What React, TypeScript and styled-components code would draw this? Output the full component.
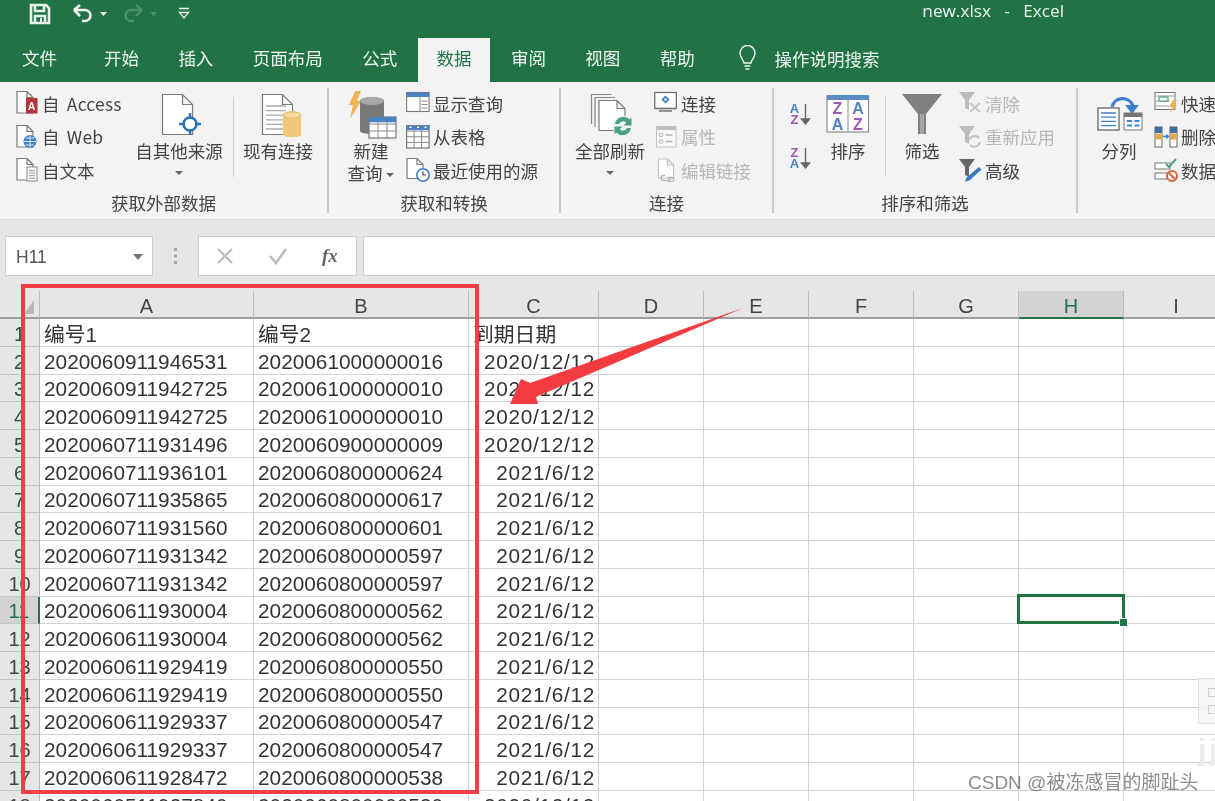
import React from "react";
import styled, { createGlobalStyle } from "styled-components";

const GREEN = "#217346";
const CJK = '"Noto Sans CJK SC", "Liberation Sans", sans-serif';

const GlobalStyle = createGlobalStyle`
  html, body { margin: 0; padding: 0; background: #fff; overflow: hidden; }
`;

const Page = styled.div`
  position: relative;
  width: 1215px;
  height: 801px;
  overflow: hidden;
  background: #fff;
  filter: blur(0.35px);
  font-family: ${CJK};
`;

/* title bar and tabs */
const Head = styled.div`
  height: 82px;
  background: ${GREEN};
  color: #eef5f0;
`;

const TitleBar = styled.div`
  height: 38px;
  display: flex;
  align-items: flex-start;
  padding: 3px 0 0 29px;
  box-sizing: border-box;
`;

const QatIcon = styled.svg<{ $gap?: number }>`
  display: block;
  margin-left: ${(p) => p.$gap || 0}px;
`;

const Title = styled.div`
  margin-left: auto;
  padding-right: 151px;
  margin-top: -3px;
  font: 17.2px/22px "Open Sans", sans-serif;
  white-space: pre;
`;

const Tabs = styled.div`
  height: 44px;
  display: flex;
  align-items: stretch;
  gap: 2.4px;
  padding-left: 3.5px;
`;

const Tab = styled.div<{ $active?: boolean; $first?: boolean }>`
  padding: 0 18.5px;
  margin-right: ${(p) => (p.$first ? 7.6 : 0)}px;
  font-size: 17.5px;
  line-height: 40px;
  background: ${(p) => (p.$active ? "#f3f3f3" : "transparent")};
  color: ${(p) => (p.$active ? GREEN : "inherit")};
`;

const TellMe = styled.div`
  display: flex;
  align-items: center;
  gap: 18px;
  margin-left: 22px;
  font-size: 17.5px;
  padding-bottom: 4px;
`;

/* ribbon */
const Ribbon = styled.div`
  height: 138px;
  box-sizing: border-box;
  display: flex;
  background: #f3f3f3;
  border-bottom: 1px solid #dcdcdc;
  color: #444;
  font-size: 17.5px;
  overflow: hidden;
`;

const Group = styled.div<{ $w: number; $last?: boolean }>`
  flex: none;
  width: ${(p) => p.$w}px;
  height: 125px;
  margin-top: 6px;
  box-sizing: border-box;
  display: flex;
  flex-direction: column;
  border-right: ${(p) => (p.$last ? "none" : "2px solid #c9c9c9")};
`;

const GroupBody = styled.div<{ $pad: number }>`
  flex: 1;
  display: flex;
  align-items: flex-start;
  padding-left: ${(p) => p.$pad}px;
  white-space: nowrap;
`;

const GroupLabel = styled.div`
  text-align: center;
  line-height: 18px;
  height: 18px;
  margin-bottom: 1px;
`;

const SmallCol = styled.div<{ $w: number; $gap?: number }>`
  flex: none;
  width: ${(p) => p.$w}px;
  margin-top: -1.5px;
  margin-left: ${(p) => p.$gap || 0}px;
  display: flex;
  flex-direction: column;
`;

const SmallRow = styled.div<{ $off?: boolean; $tight?: boolean }>`
  height: 33.5px;
  display: flex;
  align-items: center;
  gap: ${(p) => (p.$tight ? 2 : 3)}px;
  color: ${(p) => (p.$off ? "#b8b8b8" : "inherit")};
`;

const LatinLabel = styled.span`
  letter-spacing: 0.2px;
  word-spacing: 3px;
`;

const SmallIcon = styled.svg`
  flex: none;
  display: block;
  width: 24px;
  height: 24px;
`;

const LargeBtn = styled.div<{ $w: number; $gap?: number }>`
  flex: none;
  width: ${(p) => p.$w}px;
  margin-left: ${(p) => p.$gap || 0}px;
  display: flex;
  flex-direction: column;
  align-items: center;
  line-height: 22px;
`;

const LargeIcon = styled.svg`
  display: block;
  height: 52px;
  overflow: visible;
`;

const Caret = styled.span`
  display: inline-block;
  width: 0;
  height: 0;
  border-left: 4px solid transparent;
  border-right: 4px solid transparent;
  border-top: 4.5px solid #666;
  vertical-align: middle;
`;

const NameCaret = styled(Caret)`
  border-left-width: 5.5px;
  border-right-width: 5.5px;
  border-top-width: 6px;
  border-top-color: #777;
`;

const CaretRow = styled.div`
  height: 22px;
  display: flex;
  align-items: center;
  justify-content: center;
`;

const SubSep = styled.div<{ $l: number; $r: number }>`
  flex: none;
  width: 1px;
  height: 80px;
  margin: 9px ${(p) => p.$r}px 0 ${(p) => p.$l}px;
  background: #cfcfcf;
`;

/* formula bar */
const FormulaArea = styled.div`
  height: 71px;
  box-sizing: border-box;
  display: flex;
  align-items: flex-start;
  padding: 16px 0 0 5px;
  background: #e6e6e6;
`;

const NameBox = styled.div`
  flex: none;
  width: 148px;
  height: 40px;
  box-sizing: border-box;
  display: flex;
  align-items: center;
  justify-content: space-between;
  padding: 2px 9px 0 10px;
  background: #fff;
  border: 1px solid #cdcdcd;
  color: #555;
  font: 17.5px "Liberation Sans", sans-serif;
`;

const GripIcon = styled.svg`
  flex: none;
  margin: 12px 21.5px 0 20.5px;
`;

const FxBox = styled.div`
  flex: none;
  width: 159px;
  height: 40px;
  box-sizing: border-box;
  display: flex;
  align-items: center;
  gap: 34px;
  padding-left: 17px;
  background: #fff;
  border: 1px solid #cdcdcd;
`;

const FxText = styled.span`
  font: italic 700 19px "Liberation Serif", serif;
  color: #666;
`;

const FormulaInput = styled.div`
  flex: 1;
  height: 40px;
  margin-left: 6px;
  box-sizing: border-box;
  background: #fff;
  border: 1px solid #cdcdcd;
  border-right: none;
`;

/* sheet */
const Sheet = styled.div`
  display: grid;
  width: 1230px;
  grid-template-columns: 40px 214px 215px 130px 105px 105px 105px 105px 105px 105px;
  grid-template-rows: 28px;
  grid-auto-rows: 27.75px;
`;

const Corner = styled.div`
  position: relative;
  background: #e6e6e6;
  border-right: 1px solid #bdbdbd;
  border-bottom: 2px solid #9e9e9e;
  box-sizing: border-box;
  &::after {
    content: "";
    position: absolute;
    right: 5px;
    bottom: 3px;
    border-left: 10px solid transparent;
    border-bottom: 14px solid #b8b8b8;
  }
`;

const ColHead = styled.div<{ $on?: boolean }>`
  box-sizing: border-box;
  display: flex;
  align-items: center;
  justify-content: center;
  padding-top: 5px;
  font: 20px "Liberation Sans", sans-serif;
  background: ${(p) => (p.$on ? "#d3d3d3" : "#e6e6e6")};
  color: ${(p) => (p.$on ? GREEN : "#444")};
  border-right: 1px solid #bdbdbd;
  border-bottom: 2px solid ${(p) => (p.$on ? GREEN : "#9e9e9e")};
`;

const RowHead = styled.div<{ $on?: boolean }>`
  box-sizing: border-box;
  display: flex;
  align-items: flex-end;
  justify-content: center;
  font: 20px/24px "Liberation Sans", sans-serif;
  background: ${(p) => (p.$on ? "#d3d3d3" : "#e6e6e6")};
  color: ${(p) => (p.$on ? GREEN : "#444")};
  border-right: ${(p) => (p.$on ? `2px solid ${GREEN}` : "1px solid #bdbdbd")};
  border-bottom: 1px solid #c4c4c4;
`;

const Cell = styled.div<{ $date?: boolean; $title?: boolean }>`
  position: relative;
  box-sizing: border-box;
  display: flex;
  align-items: flex-end;
  justify-content: ${(p) => (p.$date ? "flex-end" : "flex-start")};
  padding: 0 ${(p) => (p.$date ? 3 : 0)}px 0 ${(p) => (p.$date ? 0 : 4)}px;
  font-family: "Liberation Sans", "Noto Sans CJK SC", sans-serif;
  font-size: 20.8px;
  line-height: ${(p) => (p.$title ? 22 : 24)}px;
  letter-spacing: ${(p) => (p.$date ? 0.7 : 0)}px;
  color: #333;
  white-space: nowrap;
  border-right: 1px solid #d2d2d2;
  border-bottom: 1px solid #d2d2d2;
`;

const Selection = styled.div`
  position: absolute;
  z-index: 2;
  inset: -2.5px -2px -1px -2px;
  border: 3px solid ${GREEN};
  &::after {
    content: "";
    position: absolute;
    right: -6px;
    bottom: -6px;
    width: 7px;
    height: 7px;
    background: ${GREEN};
    border: 1px solid #fff;
  }
`;

/* annotations over the screenshot */
const RedBox = styled.div`
  position: absolute;
  z-index: 3;
  left: 21px;
  top: 284px;
  width: 458px;
  height: 510px;
  box-sizing: border-box;
  border: 4px solid #ef3f42;
`;

const ArrowMark = styled.svg`
  position: absolute;
  z-index: 3;
  left: 500px;
  top: 300px;
`;

const Watermark = styled.div`
  position: absolute;
  z-index: 4;
  left: 968px;
  top: 771px;
  font: 19px/24px "Liberation Sans", "Noto Sans CJK SC", sans-serif;
  color: rgba(110, 110, 110, 0.8);
  white-space: nowrap;
`;

const GhostBox = styled.div`
  position: absolute;
  z-index: 4;
  left: 1198px;
  top: 678px;
  width: 30px;
  height: 46px;
  box-sizing: border-box;
  background: rgba(245, 245, 245, 0.85);
  border: 1.5px solid #e2e2e2;
  &::before,
  &::after {
    content: "";
    position: absolute;
    left: 9px;
    width: 12px;
    height: 7px;
    border: 1.5px solid #cfcfcf;
  }
  &::before { top: 9px; }
  &::after { top: 26px; }
`;

const GhostText = styled.div`
  position: absolute;
  z-index: 4;
  left: 1198px;
  top: 730px;
  font: 700 30px/40px "Liberation Sans", sans-serif;
  letter-spacing: 3px;
  color: #ececec;
`;

/* drawn icons */
const PageShape = ({ x, y, w, h, f = 6, c = "#7a7a7a" }: { x: number; y: number; w: number; h: number; f?: number; c?: string }) => (
  <path
    d={`M${x} ${y}h${w - f}l${f} ${f}v${h - f}h${-w}zM${x + w - f} ${y}v${f}h${f}`}
    fill="#fff"
    stroke={c}
    strokeWidth={1.2}
  />
);

const Lines = ({ x, y, w, n, step, c = "#aaa" }: { x: number; y: number; w: number; n: number; step: number; c?: string }) => (
  <path
    d={Array.from({ length: n }, (_, i) => `M${x} ${y + i * step}h${w}`).join("")}
    stroke={c}
    strokeWidth={1.3}
    fill="none"
  />
);

const TableShape = ({ x, y, w, h, cols, rows, head = "#4a82c3" }: { x: number; y: number; w: number; h: number; cols: number; rows: number; head?: string }) => {
  const d: string[] = [];
  for (let i = 1; i < cols; i++) d.push(`M${x + (w * i) / cols} ${y}v${h}`);
  for (let i = 1; i < rows; i++) d.push(`M${x} ${y + (h * i) / rows}h${w}`);
  return (
    <>
      <rect x={x} y={y} width={w} height={h} fill="#fff" stroke="#777" strokeWidth={1.2} />
      <path d={d.join("")} stroke="#888" strokeWidth={1} fill="none" />
      <rect x={x} y={y} width={w} height={h / (rows + 1)} fill={head} />
    </>
  );
};

const Funnel = ({ c }: { c: string }) => <path d="M1 1h16l-6 8v10l-4-2V9z" fill={c} />;

const IconAccess = () => (
  <SmallIcon viewBox="0 0 24 24">
    <PageShape x={1} y={0.5} w={16} h={21.5} />
    <rect x={10} y={7} width={11.5} height={15.5} fill="#b5343c" />
    <text x={15.7} y={19} fontSize={10} fontWeight={700} fill="#fff" textAnchor="middle" fontFamily="Liberation Sans">A</text>
  </SmallIcon>
);

const IconWeb = () => (
  <SmallIcon viewBox="0 0 24 24">
    <PageShape x={1} y={0.5} w={16} h={21.5} />
    <circle cx={14} cy={16.5} r={6.5} fill="#3f80cc" />
    <path d="M8 16.5h12M14 10.5v12M10 13h8M10 20h8" stroke="#d8e8f8" strokeWidth={1} />
  </SmallIcon>
);

const IconTextFile = () => (
  <SmallIcon viewBox="0 0 24 24">
    <PageShape x={1} y={0.5} w={16} h={21.5} />
    <rect x={11} y={9} width={10} height={14} fill="#fff" stroke="#888" />
    <Lines x={13} y={12.5} w={6} n={4} step={2.6} />
  </SmallIcon>
);

const IconOtherSources = () => (
  <LargeIcon width={88} viewBox="0 0 88 52">
    <PageShape x={27.5} y={6.5} w={30} h={40} f={10} />
    <circle cx={55} cy={36} r={6.5} fill="#fff" stroke="#2f73b5" strokeWidth={2.6} />
    <path d="M55 25v6M55 41v6M44 36h6M60 36h6" stroke="#2f73b5" strokeWidth={2.4} />
  </LargeIcon>
);

const IconConnections = () => (
  <LargeIcon width={70} viewBox="0 0 70 52">
    <PageShape x={19.5} y={6.5} w={30} h={40} f={10} />
    <Lines x={23} y={18} w={20} n={6} step={4.6} />
    <path d="M40 27c0-5 18-5 18 0v20c0 3-18 3-18 0z" fill="#efc878" />
    <ellipse cx={49} cy={27} rx={9} ry={3} fill="#f7dca2" stroke="#e4b65e" strokeWidth={0.8} />
  </LargeIcon>
);

const IconNewQuery = () => (
  <LargeIcon width={52} viewBox="0 0 52 52">
    <path d="M10 3h6l-4 10h4L5 31l3-14H4z" fill="#efb24e" />
    <path d="M15 13c0-5 24-5 24 0v30c0 4-24 4-24 0z" fill="#787878" />
    <ellipse cx={27} cy={13} rx={12} ry={4} fill="#a8a8a8" />
    <TableShape x={24} y={29} w={27} h={21} cols={3} rows={3} />
  </LargeIcon>
);

const IconShowQuery = () => (
  <SmallIcon viewBox="0 0 24 24">
    <rect x={0.6} y={1.5} width={22.5} height={19} fill="#fff" stroke="#777" strokeWidth={1.1} />
    <rect x={0.6} y={1.5} width={22.5} height={4.5} fill="#4a82c3" />
    <path d="M14 6v14M15.5 10h6M15.5 13.5h6M15.5 17h6" stroke="#888" fill="none" />
  </SmallIcon>
);

const IconFromTable = () => (
  <SmallIcon viewBox="0 0 24 24">
    <TableShape x={0.6} y={0.5} w={22.5} h={22.5} cols={3} rows={4} />
    <path d="M3.5 2.2h2M11 2.2h2M18.5 2.2h2" stroke="#fff" strokeWidth={1.6} />
  </SmallIcon>
);

const IconRecent = () => (
  <SmallIcon viewBox="0 0 24 24">
    <PageShape x={1} y={0.5} w={16} h={20} />
    <circle cx={17} cy={17} r={6.2} fill="#fff" stroke="#3f80cc" strokeWidth={1.6} />
    <path d="M17 13.5V17h3" stroke="#444" strokeWidth={1.2} fill="none" />
  </SmallIcon>
);

const IconRefreshAll = () => (
  <LargeIcon width={70} viewBox="0 0 70 52">
    <path d="M16.5 36V6.5h20M20 39V9.5h20" stroke="#888" strokeWidth={1.2} fill="none" />
    <PageShape x={24} y={12.5} w={26} h={30} f={8} />
    <circle cx={48} cy={38} r={10.5} fill="#f3f3f3" />
    <path d="M40 36a8.5 8.5 0 0 1 14.5-4.5l2-2v8h-8l2.8-2.8a4.5 4.5 0 0 0-7.3 1.3zM56 40a8.5 8.5 0 0 1-14.5 4.5l-2 2v-8h8l-2.8 2.8a4.5 4.5 0 0 0 7.3-1.3z" fill="#4aa27a" />
  </LargeIcon>
);

const IconConnect = () => (
  <SmallIcon viewBox="0 0 24 24">
    <rect x={0.8} y={1.5} width={21.5} height={16} fill="#fff" stroke="#666" strokeWidth={1.2} />
    <path d="M0.8 17.5h21.5M5 20h13" stroke="#777" strokeWidth={1.5} />
    <path d="M11.5 4.5l4 4-4 4-4-4z" fill="#3f7fc9" />
    <circle cx={11.5} cy={8.5} r={1.3} fill="#fff" />
  </SmallIcon>
);

const IconProps = () => (
  <SmallIcon viewBox="0 0 24 24">
    <rect x={2.5} y={1.5} width={19.5} height={20.5} fill="#f8f8f8" stroke="#c4c4c4" />
    <rect x={2.5} y={1.5} width={19.5} height={3.5} fill="#bdbdbd" />
    <circle cx={7} cy={10} r={1.8} fill="none" stroke="#b5b5b5" />
    <circle cx={7} cy={16.5} r={1.8} fill="none" stroke="#b5b5b5" />
    <path d="M11.5 10h7M11.5 16.5h7" stroke="#b5b5b5" strokeWidth={1.3} />
  </SmallIcon>
);

const IconEditLinks = () => (
  <SmallIcon viewBox="0 0 24 24">
    <PageShape x={4.5} y={1} w={15} h={19} c="#c2c2c2" />
    <path d="M11 17.5H9.5a2.5 2.5 0 0 0 0 5H14a2.5 2.5 0 0 0 2-4" stroke="#b8b8b8" strokeWidth={1.3} fill="none" />
    <path d="M13 19.5h5a2 2 0 0 1 0 4h-4" stroke="#b8b8b8" strokeWidth={1.3} fill="none" />
  </SmallIcon>
);

const SortSvg = styled.svg<{ $top: number }>`
  display: block;
  margin-top: ${(p) => p.$top}px;
`;

const SortSmall = ({ top, first, second, c1, c2 }: { top: number; first: string; second: string; c1: string; c2: string }) => (
  <SortSvg width={24} height={24} viewBox="0 0 24 24" $top={top}>
    <text x={5.5} y={11} fontSize={13} fontWeight={700} fill={c1} textAnchor="middle" fontFamily="Liberation Sans">{first}</text>
    <text x={5.5} y={22} fontSize={13} fontWeight={700} fill={c2} textAnchor="middle" fontFamily="Liberation Sans">{second}</text>
    <path d="M16.5 2v19M12.5 17l4 5 4-5z" stroke="#666" strokeWidth={1.4} fill="#666" />
  </SortSvg>
);

const IconSort = () => (
  <LargeIcon width={44} viewBox="0 0 44 52">
    <rect x={1} y={8} width={41.5} height={36} fill="#fff" stroke="#8a8a8a" strokeWidth={1.2} />
    <rect x={1} y={7} width={41.5} height={5} fill="#5b8cc4" />
    <path d="M22 12v32" stroke="#8a8a8a" />
    <g fontFamily="Liberation Sans" fontWeight={700} fontSize={16} textAnchor="middle">
      <text x={11.5} y={26} fill="#9b59b6">Z</text>
      <text x={11.5} y={42} fill="#4a82c3">A</text>
      <text x={32} y={26} fill="#4a82c3">A</text>
      <text x={32} y={42} fill="#9b59b6">Z</text>
    </g>
  </LargeIcon>
);

const IconFilter = () => (
  <LargeIcon width={44} viewBox="0 0 44 52">
    <path d="M2 6h40L26 26v20h-8V26z" fill="#7f7f7f" />
    <path d="M20 26h4v20h-4z" fill="#a6a6a6" />
  </LargeIcon>
);

const IconClear = () => (
  <SmallIcon viewBox="0 0 24 24">
    <Funnel c="#bcbcbc" />
    <path d="M12 12l10 9M22 12l-10 9" stroke="#c4c4c4" strokeWidth={1.8} />
  </SmallIcon>
);

const IconReapply = () => (
  <SmallIcon viewBox="0 0 24 24">
    <Funnel c="#bcbcbc" />
    <path d="M11 15a6 6 0 0 1 10-2M22 17a6 6 0 0 1-10 3" stroke="#c4c4c4" strokeWidth={2} fill="none" />
  </SmallIcon>
);

const IconAdvanced = () => (
  <SmallIcon viewBox="0 0 24 24">
    <Funnel c="#666" />
    <path d="M21 9l2.5 2.5L12 22l-5 2 1.6-4.6z" fill="#3a7cc2" />
  </SmallIcon>
);

const IconSplit = () => (
  <LargeIcon width={50} viewBox="0 0 50 52">
    <path d="M18 19c2-10 17-12 21-1" stroke="#3f80cc" strokeWidth={3.2} fill="none" />
    <path d="M31 17h14l-7 9z" fill="#3f80cc" />
    <rect x={4} y={20} width={21} height={22} fill="#fff" stroke="#666" strokeWidth={1.3} />
    <Lines x={7} y={25} w={15} n={4} step={4.2} c="#3f80cc" />
    <rect x={30} y={25} width={18} height={17} fill="#fff" stroke="#777" />
    <rect x={30} y={25} width={18} height={4} fill="#777" />
    <path d="M33 33h5M40.5 33h5M33 37.5h5M40.5 37.5h5" stroke="#3f80cc" strokeWidth={2} />
  </LargeIcon>
);

const IconFlash = () => (
  <SmallIcon viewBox="0 0 24 24">
    <rect x={1} y={1.5} width={20} height={17} fill="#fff" stroke="#777" />
    <path d="M1 5h20M1 10h14M1 15h14" stroke="#999" fill="none" />
    <rect x={5} y={6} width={9} height={4} fill="#fff" stroke="#4aa27a" strokeWidth={1.2} />
    <path d="M19 9h4l-3 5h3l-7 8 2-6h-3z" fill="#efb24e" />
  </SmallIcon>
);

const IconDedupe = () => (
  <SmallIcon viewBox="0 0 24 24">
    <rect x={1} y={2} width={7} height={20} fill="#fff" stroke="#666" />
    <rect x={1} y={2} width={7} height={6} fill="#3d6fa8" />
    <rect x={1} y={8.5} width={7} height={6} fill="#e2a94f" />
    <rect x={16} y={2} width={7} height={20} fill="#fff" stroke="#666" />
    <rect x={16} y={2} width={7} height={6} fill="#3d6fa8" />
    <rect x={16} y={8.5} width={7} height={6} fill="#e2a94f" />
    <path d="M9 11.5h5M12 9.5l2.5 2-2.5 2" stroke="#3f80cc" strokeWidth={1.3} fill="none" />
  </SmallIcon>
);

const IconValidate = () => (
  <SmallIcon viewBox="0 0 24 24">
    <rect x={1} y={5} width={15} height={6} fill="#fff" stroke="#777" />
    <rect x={1} y={15} width={12} height={6} fill="#fff" stroke="#777" />
    <path d="M12 6l3 3 7-8" stroke="#4aa27a" strokeWidth={2} fill="none" />
    <circle cx={18} cy={18} r={5} fill="#fff" stroke="#d8623f" strokeWidth={2} />
    <path d="M14.5 14.5l7 7" stroke="#d8623f" strokeWidth={2} />
  </SmallIcon>
);

const COLS = ["A", "B", "C", "D", "E", "F", "G", "H", "I"];

const ROWS: [string, string, string][] = [
  ["编号1", "编号2", "到期日期"],
  ["2020060911946531", "2020061000000016", "2020/12/12"],
  ["2020060911942725", "2020061000000010", "2020/12/12"],
  ["2020060911942725", "2020061000000010", "2020/12/12"],
  ["2020060711931496", "2020060900000009", "2020/12/12"],
  ["2020060711936101", "2020060800000624", "2021/6/12"],
  ["2020060711935865", "2020060800000617", "2021/6/12"],
  ["2020060711931560", "2020060800000601", "2021/6/12"],
  ["2020060711931342", "2020060800000597", "2021/6/12"],
  ["2020060711931342", "2020060800000597", "2021/6/12"],
  ["2020060611930004", "2020060800000562", "2021/6/12"],
  ["2020060611930004", "2020060800000562", "2021/6/12"],
  ["2020060611929419", "2020060800000550", "2021/6/12"],
  ["2020060611929419", "2020060800000550", "2021/6/12"],
  ["2020060611929337", "2020060800000547", "2021/6/12"],
  ["2020060611929337", "2020060800000547", "2021/6/12"],
  ["2020060611928472", "2020060800000538", "2021/6/12"],
  ["2020060511927840", "2020060800000530", "2020/12/12"],
];

const TABS = ["开始", "插入", "页面布局", "公式", "数据", "审阅", "视图", "帮助"];

export default function App() {
  return (
    <Page>
      <GlobalStyle />
      <Head>
        <TitleBar>
          <QatIcon width={22} height={22} viewBox="0 0 22 22">
            <path d="M2 2h15l3 3v15H2zM6 2v6h9V2M6 20v-7h10v7" fill="none" stroke="#e8f2ea" strokeWidth={2.6} />
            <path d="M11 15h2v5h-2z" fill="#e8f2ea" />
          </QatIcon>
          <QatIcon $gap={21} width={22} height={20} viewBox="0 0 22 20">
            <path d="M2 7l6-5M2 7l6 6M2 7h11a5.5 5.5 0 0 1 0 11h-3" fill="none" stroke="#eef5f0" strokeWidth={2.6} />
          </QatIcon>
          <QatIcon $gap={6} width={7} height={20} viewBox="0 0 7 20">
            <path d="M0 9h7l-3.5 4z" fill="#eef5f0" />
          </QatIcon>
          <QatIcon $gap={16} width={21} height={20} viewBox="0 0 21 20">
            <path d="M19 7l-6-5M19 7l-6 6M19 7H8a5.5 5.5 0 0 0 0 11h3" fill="none" stroke="#4a8f69" strokeWidth={2.4} />
          </QatIcon>
          <QatIcon $gap={6} width={7} height={20} viewBox="0 0 7 20">
            <path d="M0 9h7l-3.5 4z" fill="#4a8f69" />
          </QatIcon>
          <QatIcon $gap={21} width={12} height={20} viewBox="0 0 12 20">
            <path d="M1 5.5h10M1.5 9.5h9L6 15z" fill="none" stroke="#e8f2ea" strokeWidth={1.3} />
          </QatIcon>
          <Title>new.xlsx   -   Excel</Title>
        </TitleBar>
        <Tabs>
          <Tab $first>文件</Tab>
          {TABS.map((t) => (
            <Tab key={t} $active={t === "数据"}>{t}</Tab>
          ))}
          <TellMe>
            <svg width={19} height={26} viewBox="0 0 19 26">
              <path d="M6 18c0-3-4-5-4-10a7.5 7.5 0 0 1 15 0c0 5-4 7-4 10zM6.5 21h6M7.5 24h4" fill="none" stroke="#eef5f0" strokeWidth={1.4} />
            </svg>
            操作说明搜索
          </TellMe>
        </Tabs>
      </Head>

      <Ribbon>
        <Group $w={329}>
          <GroupBody $pad={16}>
            <SmallCol $w={117}>
              <SmallRow $tight><IconAccess /><LatinLabel>自 Access</LatinLabel></SmallRow>
              <SmallRow $tight><IconWeb /><LatinLabel>自 Web</LatinLabel></SmallRow>
              <SmallRow $tight><IconTextFile />自文本</SmallRow>
            </SmallCol>
            <LargeBtn $w={88} $gap={2}>
              <IconOtherSources />
              <div>自其他来源</div>
              <CaretRow><Caret /></CaretRow>
            </LargeBtn>
            <SubSep $l={10} $r={9} />
            <LargeBtn $w={70}>
              <IconConnections />
              <div>现有连接</div>
            </LargeBtn>
          </GroupBody>
          <GroupLabel>获取外部数据</GroupLabel>
        </Group>

        <Group $w={232}>
          <GroupBody $pad={16}>
            <LargeBtn $w={52}>
              <IconNewQuery />
              <div>新建</div>
              <div>查询 <Caret /></div>
            </LargeBtn>
            <SmallCol $w={150} $gap={9}>
              <SmallRow><IconShowQuery />显示查询</SmallRow>
              <SmallRow><IconFromTable />从表格</SmallRow>
              <SmallRow><IconRecent />最近使用的源</SmallRow>
            </SmallCol>
          </GroupBody>
          <GroupLabel>获取和转换</GroupLabel>
        </Group>

        <Group $w={213}>
          <GroupBody $pad={13}>
            <LargeBtn $w={72}>
              <IconRefreshAll />
              <div>全部刷新</div>
              <CaretRow><Caret /></CaretRow>
            </LargeBtn>
            <SmallCol $w={110} $gap={8}>
              <SmallRow><IconConnect />连接</SmallRow>
              <SmallRow $off><IconProps />属性</SmallRow>
              <SmallRow $off><IconEditLinks />编辑链接</SmallRow>
            </SmallCol>
          </GroupBody>
          <GroupLabel>连接</GroupLabel>
        </Group>

        <Group $w={304}>
          <GroupBody $pad={15}>
            <SmallCol $w={24}>
              <SortSmall top={15} first="A" second="Z" c1="#4a82c3" c2="#9b59b6" />
              <SortSmall top={20} first="Z" second="A" c1="#9b59b6" c2="#4a82c3" />
            </SmallCol>
            <LargeBtn $w={44} $gap={13}>
              <IconSort />
              <div>排序</div>
            </LargeBtn>
            <SubSep $l={15} $r={14} />
            <LargeBtn $w={44}>
              <IconFilter />
              <div>筛选</div>
            </LargeBtn>
            <SmallCol $w={110} $gap={14}>
              <SmallRow $off><IconClear />清除</SmallRow>
              <SmallRow $off><IconReapply />重新应用</SmallRow>
              <SmallRow><IconAdvanced />高级</SmallRow>
            </SmallCol>
          </GroupBody>
          <GroupLabel>排序和筛选</GroupLabel>
        </Group>

        <Group $w={140} $last>
          <GroupBody $pad={16}>
            <LargeBtn $w={50}>
              <IconSplit />
              <div>分列</div>
            </LargeBtn>
            <SmallCol $w={120} $gap={10}>
              <SmallRow><IconFlash />快速填充</SmallRow>
              <SmallRow><IconDedupe />删除重复值</SmallRow>
              <SmallRow><IconValidate />数据验证</SmallRow>
            </SmallCol>
          </GroupBody>
        </Group>
      </Ribbon>

      <FormulaArea>
        <NameBox>
          H11
          <NameCaret />
        </NameBox>
        <GripIcon width={3} height={16} viewBox="0 0 3 16">
          <path d="M0 0h3v3H0zM0 6.5h3v3H0zM0 13h3v3H0z" fill="#a8a8a8" />
        </GripIcon>
        <FxBox>
          <svg width={18} height={18} viewBox="0 0 18 18">
            <path d="M2 2l14 14M16 2L2 16" stroke="#bcbcbc" strokeWidth={2.2} />
          </svg>
          <svg width={20} height={18} viewBox="0 0 20 18">
            <path d="M2 9l6 7L18 2" stroke="#bcbcbc" strokeWidth={2.6} fill="none" />
          </svg>
          <FxText>fx</FxText>
        </FxBox>
        <FormulaInput />
      </FormulaArea>

      <Sheet>
        <Corner />
        {COLS.map((c) => (
          <ColHead key={c} $on={c === "H"}>{c}</ColHead>
        ))}
        {ROWS.map((row, i) => {
          const n = i + 1;
          return (
            <React.Fragment key={n}>
              <RowHead $on={n === 11}>{n}</RowHead>
              <Cell $title={n === 1}>{row[0]}</Cell>
              <Cell $title={n === 1}>{row[1]}</Cell>
              <Cell $title={n === 1} $date={n > 1}>{row[2]}</Cell>
              {COLS.slice(3).map((c) => (
                <Cell key={c}>
                  {c === "H" && n === 11 && <Selection />}
                </Cell>
              ))}
            </React.Fragment>
          );
        })}
      </Sheet>

      <RedBox />
      <ArrowMark width={250} height={110} viewBox="0 0 250 110">
        <path d="M243 8L30 83L21 79L10 104H38L36 97z" fill="#f23c3f" />
      </ArrowMark>
      <GhostBox />
      <GhostText>jj</GhostText>
      <Watermark>CSDN @被冻感冒的脚趾头</Watermark>
    </Page>
  );
}
